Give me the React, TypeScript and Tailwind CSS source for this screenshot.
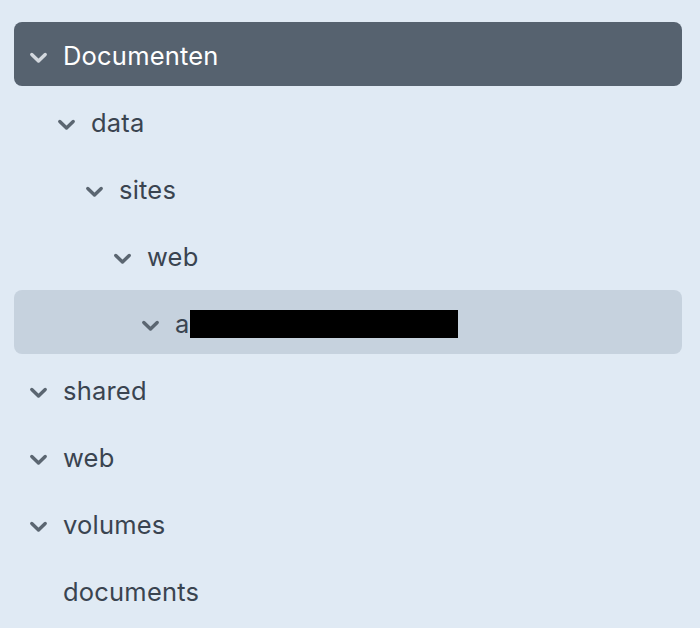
import React from "react";

type Item = { label: string; level: number; chevron: boolean; state?: "active" | "hover"; redacted?: boolean };

const items: Item[] = [
  { label: "Documenten", level: 0, chevron: true, state: "active" },
  { label: "data", level: 1, chevron: true },
  { label: "sites", level: 2, chevron: true },
  { label: "web", level: 3, chevron: true },
  { label: "a", level: 4, chevron: true, state: "hover", redacted: true },
  { label: "shared", level: 0, chevron: true },
  { label: "web", level: 0, chevron: true },
  { label: "volumes", level: 0, chevron: true },
  { label: "documents", level: 0, chevron: false },
];

const pad = ["pl-[14px]", "pl-[42px]", "pl-[70px]", "pl-[98px]", "pl-[126px]"];

function Chevron({ light }: { light: boolean }) {
  return (
    <svg width="21" height="14" viewBox="0 0 21 14" className="mt-[8px] shrink-0">
      <path
        d="M3.8 3.5 L10.5 10 L17.2 3.5"
        fill="none"
        stroke={light ? "#d3d8de" : "#5b6671"}
        strokeWidth="3.4"
        strokeLinecap="round"
        strokeLinejoin="round"
      />
    </svg>
  );
}

export default function App() {
  return (
    <div className="w-[700px] h-[628px] bg-[#e0eaf4] overflow-hidden pt-[22px] pl-[14px] pr-[18px]" style={{ fontFamily: "Inter, 'Noto Sans', sans-serif" }}>
      <div className="flex flex-col gap-[3px]">
        {items.map((it, i) => {
          const bg =
            it.state === "active" ? "bg-[#56626f] text-white" : it.state === "hover" ? "bg-[#c6d2de] text-[#3a4450]" : "text-[#3a4450]";
          return (
            <div key={i} className={`h-[64px] rounded-[8px] flex items-center ${bg} ${pad[it.level]}`}>
              {it.chevron ? <Chevron light={it.state === "active"} /> : <div className="w-[21px] shrink-0" />}
              <span className="ml-[14px] mt-[4px] text-[25.5px] leading-none tracking-[0.2px]">{it.label}</span>
              {it.redacted && <div className="w-[268px] h-[28px] bg-black mt-[4px]" />}
            </div>
          );
        })}
      </div>
    </div>
  );
}
